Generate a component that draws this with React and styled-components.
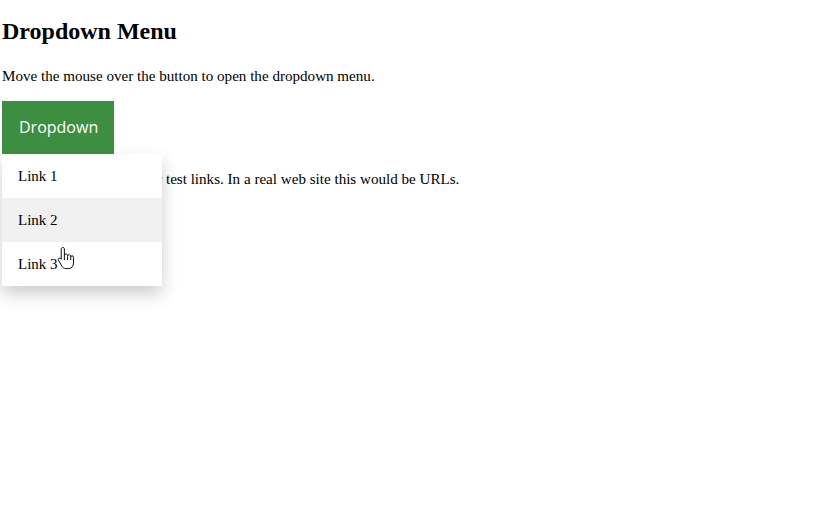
import React from 'react';
import styled, { createGlobalStyle } from 'styled-components';

const GlobalStyle = createGlobalStyle`
  body {
    margin: 0;
    background: #fff;
    font-family: "Liberation Serif", "Times New Roman", serif;
    color: #000;
  }
`;

const Page = styled.div`
  min-height: 100vh;
  padding: 1px 2px 0;
  box-sizing: border-box;
`;

const Title = styled.h2`
  font-size: 24px;
  font-weight: bold;
  margin: 17px 0 22px;
`;

const Text = styled.p`
  font-size: 15.1px;
  line-height: 18px;
  margin: 16px 0;
`;

const Dropdown = styled.div`
  position: relative;
  display: inline-block;
  vertical-align: top;
`;

const Button = styled.button`
  display: block;
  background: #3e8e41;
  color: #fff;
  padding: 16px 16px 16px 17px;
  font-size: 16px;
  line-height: 21px;
  font-family: "Open Sans", "Liberation Sans", sans-serif;
  border: none;
  cursor: pointer;
`;

const Menu = styled.div`
  position: absolute;
  top: 100%;
  left: 0;
  min-width: 160px;
  background: #fff;
  box-shadow: 0 8px 16px 0 rgba(0, 0, 0, 0.2);
  z-index: 1;
`;

const Item = styled.a`
  display: block;
  padding: 12px 16px;
  line-height: 20px;
  font-size: 15px;
  color: #000;
  text-decoration: none;
  background: ${p => (p.$hover ? '#f1f1f1' : '#fff')};
`;

const Cursor = styled.svg`
  position: absolute;
  left: 55px;
  top: 144px;
  z-index: 2;
`;

const Hand = () => (
  <Cursor width="19" height="25" viewBox="0 0 18 22">
    <path
      d="M5.5 1.5c.8 0 1.5.6 1.5 1.4v6.3c0-.8.7-1.4 1.5-1.4s1.5.6 1.5 1.4v.6c0-.8.7-1.4 1.5-1.4s1.5.6 1.5 1.4v.8c0-.8.6-1.3 1.3-1.3s1.3.6 1.3 1.4v5.6c0 2.8-1.9 5.2-4.6 5.2H8.3c-1.5 0-2.7-.8-3.5-2L1.4 13.6c-.4-.7-.2-1.5.5-1.9.6-.3 1.4-.1 1.8.4L4 12.6V2.9c0-.8.7-1.4 1.5-1.4z"
      fill="#fff"
      stroke="#000"
      strokeWidth="0.9"
      strokeLinejoin="round"
    />
    <path d="M7 9.2v4.3M10 9.9v3.6M13 10.7v2.8" stroke="#000" strokeWidth="0.9" fill="none" />
  </Cursor>
);

export default function App() {
  return (
    <Page>
      <GlobalStyle />
      <Title>Dropdown Menu</Title>
      <Text>Move the mouse over the button to open the dropdown menu.</Text>
      <Dropdown>
        <Button>Dropdown</Button>
        <Menu>
          <Item href="#">Link 1</Item>
          <Item href="#" $hover>Link 2</Item>
          <Item href="#">Link 3</Item>
        </Menu>
        <Hand />
      </Dropdown>
      <Text>
        <strong>Note:</strong> We use href="#" for test links. In a real web site this would be URLs.
      </Text>
    </Page>
  );
}
